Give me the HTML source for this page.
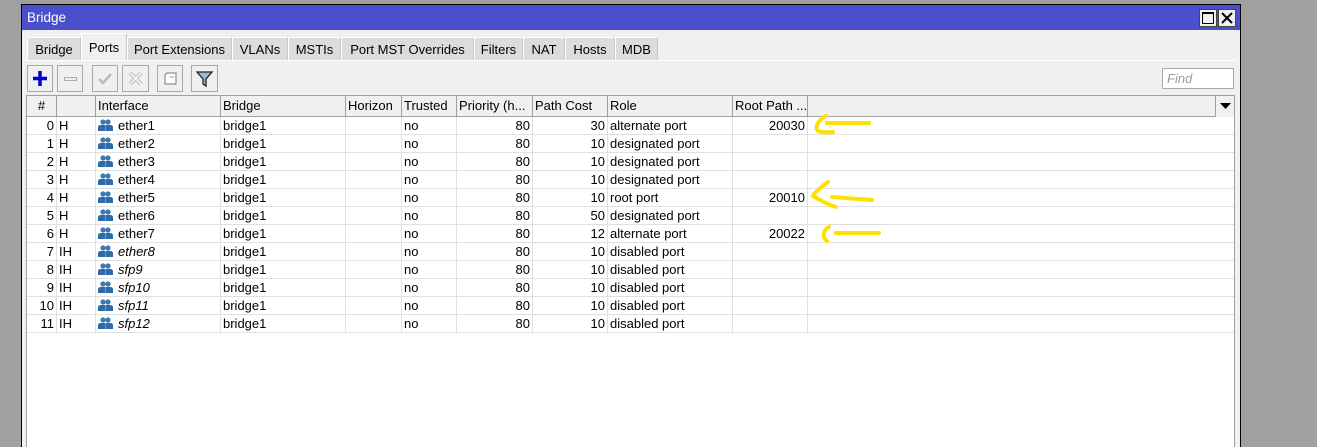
<!DOCTYPE html>
<html><head><meta charset="utf-8"><style>
*{margin:0;padding:0;box-sizing:border-box}
html,body{width:1317px;height:447px;overflow:hidden}
body{background:#a0a0a0;position:relative;font-family:"Liberation Sans",Arial,sans-serif;font-size:13px;color:#000}
.win{position:absolute;left:21px;top:4px;width:1220px;height:443px;background:#f0f0f0;border:1px solid #000;border-bottom:none;overflow:hidden}
.title{position:absolute;left:0;top:0;width:1218px;height:25px;background:#4a4fcc;color:#fff;font-size:13.5px;padding:5px 0 0 5px}
.tb{position:absolute;top:4px;width:18px;height:18px;background:#f0f0f0;border:1px solid #444}
.tab{position:absolute;top:32px;height:24px;background:#dcdcdc;border:1px solid #fff;border-bottom:none;border-right:1px solid #c8c8c8;text-align:center;padding-top:4px;font-size:13px}
.tab.act{top:28px;height:28px;background:#f0f0f0;padding-top:6px}
.btn{position:absolute;top:60px;height:27px;border:1px solid #a8a8a8;background:#f0f0f0}
.tbl{position:absolute;left:4px;top:90px;width:1209px;height:353px;background:#fff;border:1px solid #a0a0a0;border-bottom:none;overflow:hidden}
.hdr{position:absolute;left:0;top:0;width:100%;height:21px;background:#f0f0f0;border-bottom:1px solid #a0a0a0}
.c{position:absolute;height:18px;line-height:18px;padding:0 2px;white-space:nowrap;overflow:hidden;border-right:1px solid #e0e0e0;border-bottom:1px solid #e0e0e0}
.h{height:21px;line-height:20px;border-right:1px solid #a0a0a0;border-bottom:none}
.r{text-align:right}
.ic{display:inline-block;width:15px;height:12px;vertical-align:-1px;margin-right:5px}
</style></head><body>
<div class="win">
<div class="title">Bridge</div>
<div class="tb" style="left:1177px"><div style="position:absolute;left:2px;top:2px;width:12px;height:12px;border:1px solid #000;border-top-width:2px"></div></div>
<div class="tb" style="left:1196px"><svg width="16" height="16" style="position:absolute;left:0;top:0"><path d="M3 3L13 13M13 3L3 13" stroke="#000" stroke-width="2"/></svg></div>
<div class="tab" style="left:5px;width:54px">Bridge</div>
<div class="tab act" style="left:59px;width:46px">Ports</div>
<div class="tab" style="left:105px;width:105px">Port Extensions</div>
<div class="tab" style="left:210px;width:56px">VLANs</div>
<div class="tab" style="left:266px;width:53px">MSTIs</div>
<div class="tab" style="left:319px;width:133px">Port MST Overrides</div>
<div class="tab" style="left:452px;width:49px">Filters</div>
<div class="tab" style="left:501px;width:42px">NAT</div>
<div class="tab" style="left:543px;width:50px">Hosts</div>
<div class="tab" style="left:593px;width:43px">MDB</div>
<div style="position:absolute;left:3px;top:55px;width:1212px;height:1px;background:#fff"></div>
<div class="btn" style="left:5px;width:26px"><svg width="24" height="25"><path d="M12 5V20M5 12.5H19" stroke="#00c" stroke-width="3.5"/></svg></div>
<div class="btn" style="left:35px;width:26px"><div style="position:absolute;left:6px;top:11px;width:13px;height:4px;border:1px solid #aaa"></div></div>
<div class="btn" style="left:70px;width:26px"><svg width="24" height="25"><path d="M6 13L10 17L18 8" stroke="#bbb" stroke-width="2.5" fill="none"/></svg></div>
<div class="btn" style="left:100px;width:27px"><svg width="25" height="25"><path d="M7 7L18 18M18 7L7 18" stroke="#bbb" stroke-width="4"/><path d="M7 7L18 18M18 7L7 18" stroke="#f0f0f0" stroke-width="2"/></svg></div>
<div class="btn" style="left:135px;width:26px"><svg width="24" height="25"><path d="M7 9L9 7H18V18H7Z" stroke="#777" fill="#fff"/><path d="M12 11H16" stroke="#999"/></svg></div>
<div class="btn" style="left:169px;width:27px"><svg width="25" height="25"><path d="M5 6H20L14 13V20L11 18V13Z" stroke="#222" fill="#9ab8d8" stroke-width="1.3"/></svg></div>
<div style="position:absolute;left:1140px;top:63px;width:72px;height:21px;background:#fff;border:1px solid #aaa;color:#99a;font-style:italic;font-size:13px;padding:2px 4px">Find</div>
<div class="tbl">
<div class="hdr"></div>
<div id="g"></div>
<div style="position:absolute;left:1188px;top:0;width:20px;height:21px;border-left:1px solid #a0a0a0;background:#f0f0f0"><svg width="20" height="20"><path d="M4 7H15L9.5 13Z" fill="#000"/></svg></div>
</div>
</div>
<svg width="1317" height="447" style="position:absolute;left:0;top:0">
<g stroke="#ffe000" stroke-width="4" fill="none" stroke-linecap="round">
<path d="M826 116C818 120 814 128 818 131C822 133 830 132 833 132M827 123H869"/>
<path d="M828 182C820 188 814 193 813 196C820 200 826 204 836 207M832 197C845 198 858 199 872 200"/>
<path d="M829 227C823 230 822 238 827 241M836 233H879"/>
</g></svg>
<script>
var cols=[[4,30,'#','r'],[34,39,''],[73,125,'Interface'],[198,125,'Bridge'],[323,56,'Horizon'],[379,55,'Trusted'],[434,76,'Priority (h...'],[510,75,'Path Cost'],[585,125,'Role'],[710,75,'Root Path ...'],[785,430,'']];
var rows=[['0','H','ether1','alternate port','30','20030'],['1','H','ether2','designated port','10',''],['2','H','ether3','designated port','10',''],['3','H','ether4','designated port','10',''],['4','H','ether5','root port','10','20010'],['5','H','ether6','designated port','50',''],['6','H','ether7','alternate port','12','20022'],['7','IH','ether8','disabled port','10',''],['8','IH','sfp9','disabled port','10',''],['9','IH','sfp10','disabled port','10',''],['10','IH','sfp11','disabled port','10',''],['11','IH','sfp12','disabled port','10','']];
var ic='<svg class="ic" viewBox="0 0 15 12"><circle cx="5" cy="3" r="2.6" fill="#3a78b8"/><circle cx="10" cy="3" r="2.6" fill="#3a78b8"/><path d="M0 12V8.5Q0 6 3 6H12Q15 6 15 8.5V12Z" fill="#2f6aa8"/><path d="M7.5 6V12" stroke="#8ab" stroke-width=".8"/></svg>';
var h='';
cols.forEach(function(c){h+='<div class="c h" style="left:'+(c[0]-4)+'px;top:0;width:'+c[1]+'px;'+(c[3]?'text-align:center':'')+'">'+c[2]+'</div>';});
rows.forEach(function(r,i){var t=21+i*18;var it=r[1]=='IH'?'font-style:italic;':'';
var v=[[r[0],'r'],[r[1],''],[ic+'<span style="'+it+'">'+r[2]+'</span>',''],['bridge1',''],['',''],['no',''],['80','r'],[r[4],'r'],[r[3],''],[r[5],'r'],['','']];
cols.forEach(function(c,j){h+='<div class="c '+v[j][1]+'" style="left:'+(c[0]-4)+'px;top:'+t+'px;width:'+c[1]+'px;'+(j==10?'border-right:none;':'')+'">'+v[j][0]+'</div>';});});
document.getElementById('g').innerHTML=h;
</script>
</body></html>
